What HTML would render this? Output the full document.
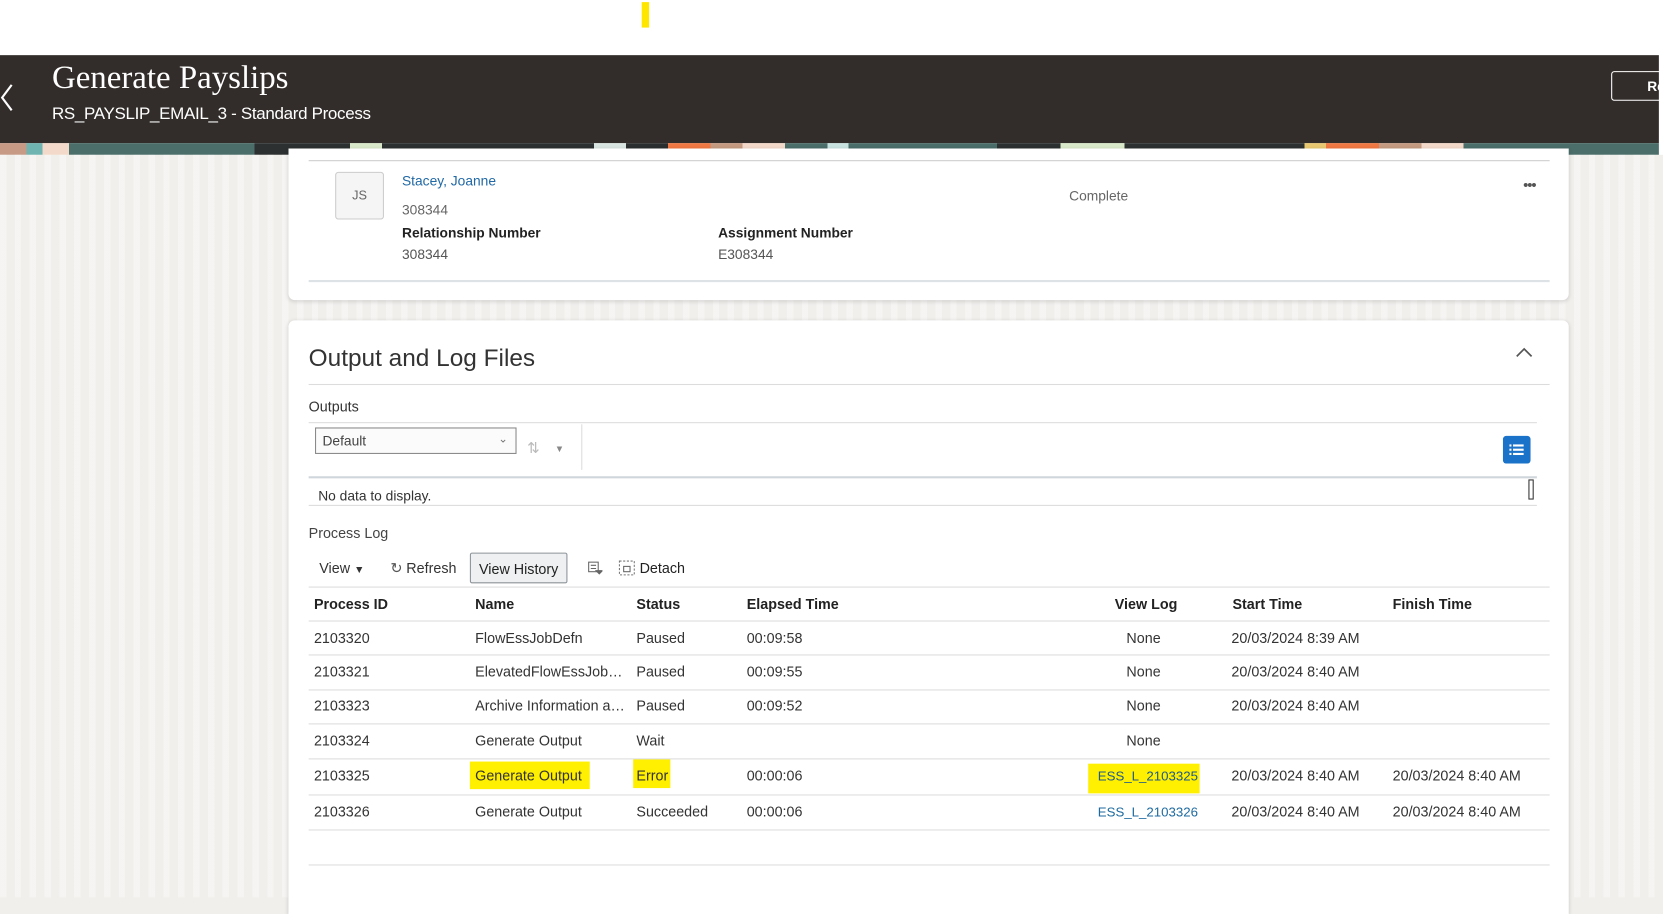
<!DOCTYPE html>
<html><head><meta charset="utf-8"><style>
html,body{margin:0;padding:0;width:1663px;height:882px;overflow:hidden;background:#f1efec}
#w{position:absolute;left:0;top:0;width:1568px;height:832px;transform:scale(1.06066);transform-origin:0 0;font-family:"Liberation Sans",sans-serif;color:#333}
.a{position:absolute;white-space:nowrap}
.top{position:absolute;left:0;top:0;width:1568px;height:146px;background:#fff}
.bg{position:absolute;left:0;top:146px;width:1568px;height:700px;background:#f1efec;background-image:repeating-linear-gradient(90deg,rgba(255,255,255,.35) 0 6px,transparent 6px 14px)}
.card{position:absolute;background:#fff;box-shadow:0 1px 4px rgba(0,0,0,.15);border-radius:4px}
.ln{position:absolute;height:1px;background:#dcdcdc}
.t{font-size:13.5px;color:#333}
.h{font-size:13.5px;font-weight:bold;color:#222}
.hl{position:absolute;background:#ffef00}
</style></head><body><div id="w">
<div class="top"></div>
<div class="a" style="left:605px;top:2px;width:7px;height:24px;background:#ffe600"></div>
<div class="a" style="left:0;top:52px;width:1564px;height:83px;background:#322d2a"></div>
<div class="a" style="left:0;top:135px;width:1564px;height:11px;background:linear-gradient(90deg,#c79a86 0 25px,#6fb4b0 25px 40px,#f2d9c9 40px 65px,#4b6e6a 65px 240px,#2c3030 240px 330px,#d8e8c8 330px 360px,#2c3030 360px 560px,#d9e5e0 560px 590px,#2a2e2e 590px 630px,#f07842 630px 670px,#c49a80 670px 700px,#f3d8c8 700px 740px,#4b6e6a 740px 780px,#c8e2e0 780px 800px,#4b6e6a 800px 940px,#2c3030 940px 1000px,#d8e8c8 1000px 1060px,#2c3030 1060px 1230px,#e8c870 1230px 1250px,#f07842 1250px 1300px,#c49a80 1300px 1340px,#f3d8c8 1340px 1380px,#4b6e6a 1380px 1564px)"></div>
<svg class="a" style="left:0;top:78px" width="14" height="28"><path d="M11 2 L2 14 L11 26" stroke="#fff" stroke-width="2" fill="none"/></svg>
<div class="a" style="left:49px;top:55px;font-family:'Liberation Serif',serif;font-size:31px;color:#fff">Generate Payslips</div>
<div class="a" style="left:49px;top:99px;font-size:16px;color:#fff;letter-spacing:-0.3px">RS_PAYSLIP_EMAIL_3 - Standard Process</div>
<div class="a" style="left:1519px;top:67px;width:50px;height:28px;border:1px solid #fff;border-radius:3px;color:#fff;font-size:13px;font-weight:bold;line-height:28px;padding-left:33px;box-sizing:border-box">Re</div>
<div class="bg"></div>
<div class="card" style="left:272px;top:140px;width:1207px;height:143px;border-radius:0 0 6px 6px"></div>
<div class="ln" style="left:291px;top:151px;width:1170px;background:#ccc"></div>
<div class="a" style="left:316px;top:162px;width:44px;height:43px;border:1px solid #ccc;background:#f5f5f5;border-radius:3px;font-size:12px;color:#666;text-align:center;line-height:43px">JS</div>
<div class="a" style="left:379px;top:163px;font-size:13px;color:#2169a5">Stacey, Joanne</div>
<div class="a" style="left:379px;top:190px;font-size:13px;color:#666">308344</div>
<div class="a h" style="left:379px;top:212px;font-size:13px">Relationship Number</div>
<div class="a" style="left:379px;top:232px;font-size:13px;color:#555">308344</div>
<div class="a h" style="left:677px;top:212px;font-size:13px">Assignment Number</div>
<div class="a" style="left:677px;top:232px;font-size:13px;color:#555">E308344</div>
<div class="a" style="left:1008px;top:177px;font-size:13px;color:#666">Complete</div>
<div class="a" style="left:1436px;top:166px;font-size:14px;color:#555;letter-spacing:-1px">•••</div>
<div class="ln" style="left:291px;top:264px;width:1170px;height:2px;background:#dde2e6"></div>
<div class="card" style="left:272px;top:302px;width:1207px;height:560px;border-radius:6px 6px 0 0"></div>
<div class="a" style="left:291px;top:324px;font-size:23px;color:#333">Output and Log Files</div>
<svg class="a" style="left:1428px;top:326px" width="18" height="12"><path d="M2 10 L9 3 L16 10" stroke="#555" stroke-width="1.6" fill="none"/></svg>
<div class="ln" style="left:291px;top:362px;width:1170px"></div>
<div class="a" style="left:291px;top:376px;font-size:13.5px;color:#333">Outputs</div>
<div class="ln" style="left:291px;top:398px;width:1158px"></div>
<div class="a" style="left:297px;top:403px;width:190px;height:25px;border:1px solid #888;box-sizing:border-box;background:#fbfbfb;font-size:13px;color:#444;line-height:23px;padding-left:6px">Default<span style="position:absolute;right:7px;top:-1px;color:#777;font-size:11px">&#8964;</span></div>
<div class="a" style="left:497px;top:414px;font-size:14px;color:#bbb">⇅</div>
<div class="a" style="left:523px;top:418px;font-size:9px;color:#888">▼</div>
<div class="a" style="left:548px;top:400px;width:1px;height:43px;background:#ddd"></div>
<div class="a" style="left:1417px;top:411px;width:26px;height:26px;background:#1a73c8;border-radius:3px"></div>
<svg class="a" style="left:1423px;top:418px" width="14" height="12"><g fill="#fff"><rect x="0" y="1" width="2" height="2"/><rect x="3.5" y="1" width="10" height="2"/><rect x="0" y="5" width="2" height="2"/><rect x="3.5" y="5" width="10" height="2"/><rect x="0" y="9" width="2" height="2"/><rect x="3.5" y="9" width="10" height="2"/></g></svg>
<div class="ln" style="left:291px;top:449px;width:1158px;height:2px;background:#cfd6dc"></div>
<div class="a" style="left:300px;top:460px;font-size:13px;color:#333">No data to display.</div>
<div class="ln" style="left:291px;top:476px;width:1158px"></div>
<div class="a" style="left:1441px;top:452px;width:5px;height:19px;border:1px solid #333;background:#fff;box-sizing:border-box"></div>
<div class="a" style="left:291px;top:495px;font-size:13.5px;color:#444">Process Log</div>
<div class="a t" style="left:301px;top:528px">View <span style="font-size:10px">▼</span></div>
<div class="a t" style="left:368px;top:528px"><span style="color:#555">↻</span> Refresh</div>
<div class="a" style="left:443px;top:521px;width:92px;height:29px;border:1px solid #8c9398;border-radius:2px;background:#eef0f2;box-sizing:border-box;font-size:13.5px;line-height:30px;text-align:center;color:#222">View History</div>
<svg class="a" style="left:554px;top:529px" width="14" height="13"><g stroke="#666" fill="none"><rect x="1" y="1" width="9" height="9"/><path d="M3 4h5M3 7h5"/><path d="M8 9h6l-3 3z" fill="#666"/></g></svg>
<svg class="a" style="left:583px;top:528px" width="16" height="15"><g stroke="#777" fill="none" stroke-dasharray="2 1.5"><rect x="1" y="1" width="14" height="13"/></g><rect x="5" y="6" width="6" height="5" fill="none" stroke="#666"/></svg>
<div class="a t" style="left:603px;top:528px;color:#222">Detach</div>
<div class="ln" style="left:291px;top:553px;width:1170px"></div>
<div class="a h" style="left:296px;top:562px">Process ID</div>
<div class="a h" style="left:448px;top:562px">Name</div>
<div class="a h" style="left:600px;top:562px">Status</div>
<div class="a h" style="left:704px;top:562px">Elapsed Time</div>
<div class="a h" style="left:1051px;top:562px">View Log</div>
<div class="a h" style="left:1162px;top:562px">Start Time</div>
<div class="a h" style="left:1313px;top:562px">Finish Time</div>
<div class="ln" style="left:291px;top:585px;width:1170px"></div>
<div class="ln" style="left:291px;top:617px;width:1170px"></div>
<div class="ln" style="left:291px;top:650px;width:1170px"></div>
<div class="ln" style="left:291px;top:682px;width:1170px"></div>
<div class="ln" style="left:291px;top:715px;width:1170px"></div>
<div class="ln" style="left:291px;top:749px;width:1170px"></div>
<div class="ln" style="left:291px;top:782px;width:1170px"></div>
<div class="ln" style="left:291px;top:815px;width:1170px"></div>
<div class="hl" style="left:443px;top:718px;width:113px;height:26px"></div>
<div class="hl" style="left:597px;top:716px;width:35px;height:27px"></div>
<div class="hl" style="left:1026px;top:720px;width:105px;height:28px"></div>
<div class="a t" style="left:296px;top:594px">2103320</div><div class="a t" style="left:448px;top:594px">FlowEssJobDefn</div><div class="a t" style="left:600px;top:594px">Paused</div><div class="a t" style="left:704px;top:594px">00:09:58</div><div class="a t" style="left:1062px;top:594px">None</div><div class="a t" style="left:1161px;top:594px">20/03/2024 8:39 AM</div>
<div class="a t" style="left:296px;top:626px">2103321</div><div class="a t" style="left:448px;top:626px">ElevatedFlowEssJob…</div><div class="a t" style="left:600px;top:626px">Paused</div><div class="a t" style="left:704px;top:626px">00:09:55</div><div class="a t" style="left:1062px;top:626px">None</div><div class="a t" style="left:1161px;top:626px">20/03/2024 8:40 AM</div>
<div class="a t" style="left:296px;top:658px">2103323</div><div class="a t" style="left:448px;top:658px">Archive Information a…</div><div class="a t" style="left:600px;top:658px">Paused</div><div class="a t" style="left:704px;top:658px">00:09:52</div><div class="a t" style="left:1062px;top:658px">None</div><div class="a t" style="left:1161px;top:658px">20/03/2024 8:40 AM</div>
<div class="a t" style="left:296px;top:691px">2103324</div><div class="a t" style="left:448px;top:691px">Generate Output</div><div class="a t" style="left:600px;top:691px">Wait</div><div class="a t" style="left:1062px;top:691px">None</div>
<div class="a t" style="left:296px;top:724px">2103325</div><div class="a t" style="left:448px;top:724px">Generate Output</div><div class="a t" style="left:600px;top:724px">Error</div><div class="a t" style="left:704px;top:724px">00:00:06</div><div class="a" style="left:1035px;top:725px;font-size:12.5px;color:#1e5a8c">ESS_L_2103325</div><div class="a t" style="left:1161px;top:724px">20/03/2024 8:40 AM</div><div class="a t" style="left:1313px;top:724px">20/03/2024 8:40 AM</div>
<div class="a t" style="left:296px;top:758px">2103326</div><div class="a t" style="left:448px;top:758px">Generate Output</div><div class="a t" style="left:600px;top:758px">Succeeded</div><div class="a t" style="left:704px;top:758px">00:00:06</div><div class="a" style="left:1035px;top:759px;font-size:12.5px;color:#1e6aa0">ESS_L_2103326</div><div class="a t" style="left:1161px;top:758px">20/03/2024 8:40 AM</div><div class="a t" style="left:1313px;top:758px">20/03/2024 8:40 AM</div>
</div></body></html>
